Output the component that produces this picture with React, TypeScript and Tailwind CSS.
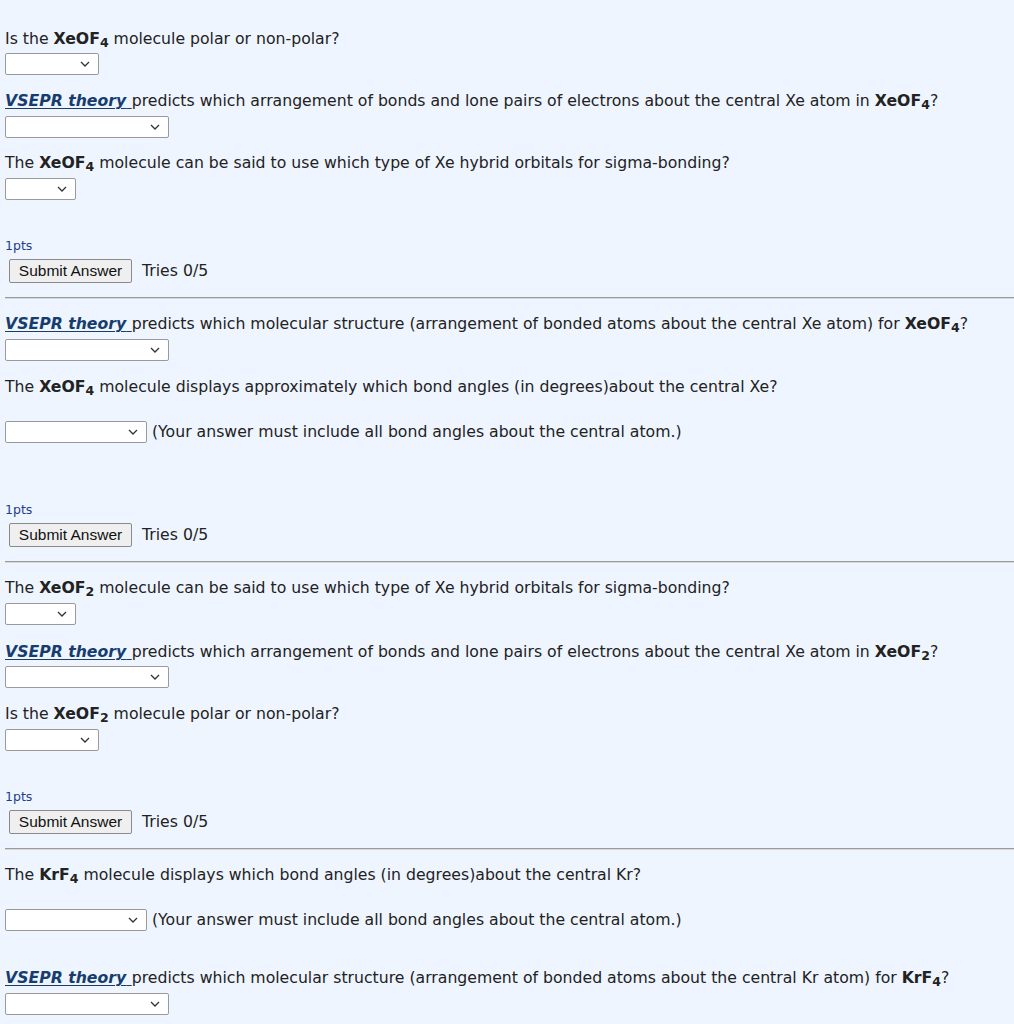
import React from 'react'

const font = { fontFamily: '"DejaVu Sans", Verdana, sans-serif' }

function F({ base, sub }: { base: string; sub?: string }) {
  return (
    <b className="font-bold">
      {base}
      {sub && <span className="relative top-[3px] text-[12.5px] leading-none">{sub}</span>}
    </b>
  )
}

function Vsepr() {
  return (
    <a className="font-bold italic text-[#173c6e] underline underline-offset-2 decoration-1">
      VSEPR theory{' '}
    </a>
  )
}

function Q({ children, mt }: { children: React.ReactNode; mt: string }) {
  return <div className={`${mt} h-[18px] leading-[18px] whitespace-nowrap`}>{children}</div>
}

function Sel({ w, mt, note }: { w: string; mt: string; note?: boolean }) {
  return (
    <div className={`${mt} flex items-center h-[22px]`}>
      <div className={`${w} h-[22px] bg-white border border-[#9a9a9a] rounded-[2px] flex items-center justify-end pr-[8px]`}>
        <svg width="10" height="6" viewBox="0 0 10 6" fill="none">
          <path d="M1 1 L5 5 L9 1" stroke="#333" strokeWidth="1.3" />
        </svg>
      </div>
      {note && <span className="ml-[5px]">(Your answer must include all bond angles about the central atom.)</span>}
    </div>
  )
}

function Submit({ mt }: { mt: string }) {
  return (
    <>
      <div className={`${mt} h-[15px] leading-[15px] text-[12.5px] text-[#1f3d8c]`}>1pts</div>
      <div className="mt-[6px] flex items-center h-[24px]">
        <div
          className="ml-[4px] h-[24px] w-[123px] bg-[#efefef] border border-[#8a8a8a] rounded-[2px] flex items-center justify-center text-[15.5px] text-[#111]"
          style={{ fontFamily: '"Liberation Sans", Arial, sans-serif' }}
        >
          Submit Answer
        </div>
        <span className="ml-[10px]">Tries 0/5</span>
      </div>
      <div className="mt-[14px] h-[2px] border-t border-t-[#9c9c9c] border-b border-b-[#d8d8d8]" />
    </>
  )
}

export default function App() {
  return (
    <div className="min-h-screen bg-[#eef5ff] text-[15.7px] text-[#222]" style={font}>
      <div className="pl-[5px] pt-[30px] flex flex-col">
        <Q mt="mt-0">
          Is the <F base="XeOF" sub="4" /> molecule polar or non-polar?
        </Q>
        <Sel w="w-[94px]" mt="mt-[5px]" />
        <Q mt="mt-[17px]">
          <Vsepr />
          predicts which arrangement of bonds and lone pairs of electrons about the central Xe atom in <F base="XeOF" sub="4" />?
        </Q>
        <Sel w="w-[164px]" mt="mt-[6px]" />
        <Q mt="mt-[16px]">
          The <F base="XeOF" sub="4" /> molecule can be said to use which type of Xe hybrid orbitals for sigma-bonding?
        </Q>
        <Sel w="w-[71px]" mt="mt-[6px]" />
        <Submit mt="mt-[38px]" />

        <Q mt="mt-[16px]">
          <Vsepr />
          predicts which molecular structure (arrangement of bonded atoms about the central Xe atom) for <F base="XeOF" sub="4" />?
        </Q>
        <Sel w="w-[164px]" mt="mt-[6px]" />
        <Q mt="mt-[17px]">
          The <F base="XeOF" sub="4" /> molecule displays approximately which bond angles (in degrees)about the central Xe?
        </Q>
        <Sel w="w-[142px]" mt="mt-[25px]" note />
        <Submit mt="mt-[59px]" />

        <Q mt="mt-[16px]">
          The <F base="XeOF" sub="2" /> molecule can be said to use which type of Xe hybrid orbitals for sigma-bonding?
        </Q>
        <Sel w="w-[71px]" mt="mt-[6px]" />
        <Q mt="mt-[18px]">
          <Vsepr />
          predicts which arrangement of bonds and lone pairs of electrons about the central Xe atom in <F base="XeOF" sub="2" />?
        </Q>
        <Sel w="w-[164px]" mt="mt-[5px]" />
        <Q mt="mt-[17px]">
          Is the <F base="XeOF" sub="2" /> molecule polar or non-polar?
        </Q>
        <Sel w="w-[94px]" mt="mt-[6px]" />
        <Submit mt="mt-[38px]" />

        <Q mt="mt-[16px]">
          The <F base="KrF" sub="4" /> molecule displays which bond angles (in degrees)about the central Kr?
        </Q>
        <Sel w="w-[142px]" mt="mt-[25px]" note />
        <Q mt="mt-[38px]">
          <Vsepr />
          predicts which molecular structure (arrangement of bonded atoms about the central Kr atom) for <F base="KrF" sub="4" />?
        </Q>
        <Sel w="w-[164px]" mt="mt-[6px]" />
        <div className="h-[40px]" />
      </div>
    </div>
  )
}
